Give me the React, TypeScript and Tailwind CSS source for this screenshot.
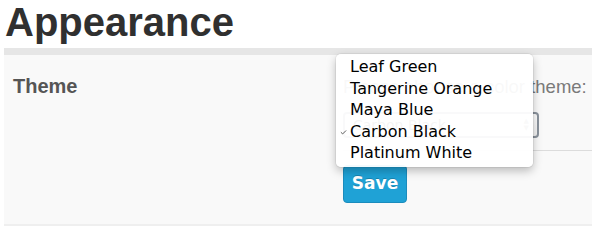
import { Check } from 'lucide-react';

const themes = ['Leaf Green', 'Tangerine Orange', 'Maya Blue', 'Carbon Black', 'Platinum White'];
const selected = 'Carbon Black';

export default function App() {
  return (
    <div className="min-h-screen w-[592px] bg-white font-['Liberation_Sans',Arial,sans-serif]">
      <h1 className="pl-[5px] text-[40px] font-bold leading-[44px] text-[#303030]">Appearance</h1>

      <div className="ml-1 mt-[4px]">
        <div className="h-[7px] bg-[#e6e6e6]" />
        <div className="relative flex border-b-2 border-[#efefef] bg-[#f9f9f9] pb-[21px] pt-[19px]">
          <div className="w-[339px] shrink-0 pl-[9px]">
            <p className="text-[20px] font-bold leading-6 text-[#555]">Theme</p>
          </div>

          <div className="flex-1">
            <p className="mt-[2px] whitespace-nowrap text-[18.5px] leading-[22px] text-[#7a7a7a]">Please choose a color theme:</p>
            <div className="mt-[14px] flex h-[26px] w-[196px] items-center justify-between rounded-[4px] border-2 border-[#8a929c] bg-gradient-to-b from-white to-[#f1f1f1] px-2 font-['DejaVu_Sans',sans-serif] text-[14px] text-[#333]">
              <span>Carbon Black</span>
              <span className="flex flex-col text-[7px] leading-[7px] text-[#888]">
                <span>▲</span>
                <span>▼</span>
              </span>
            </div>
            <div className="mt-[12px] h-px bg-[#dcdcdc]" />
            <button className="mt-[14px] h-[38px] w-[64px] rounded-[4px] border border-[#1b8cbd] bg-[#1fa2d6] font-['DejaVu_Sans',sans-serif] text-[17px] font-bold text-white [text-shadow:0_-1px_0_rgba(0,0,0,0.2)]">
              Save
            </button>
          </div>

          <ul className="absolute left-[332px] top-[-1px] w-[197px] rounded-[5px] bg-white/95 pb-[3px] pt-[2px] font-['DejaVu_Sans',sans-serif] text-[16px] leading-[21.5px] text-black shadow-[0_4px_10px_rgba(0,0,0,0.25)] ring-1 ring-black/5">
            {themes.map((theme) => (
              <li key={theme} className="relative pl-[14px]">
                {theme === selected && (
                  <Check className="absolute left-[4px] top-[8px] h-[7px] w-[7px] text-[#444]" strokeWidth={3} />
                )}
                {theme}
              </li>
            ))}
          </ul>
        </div>
      </div>
    </div>
  );
}
